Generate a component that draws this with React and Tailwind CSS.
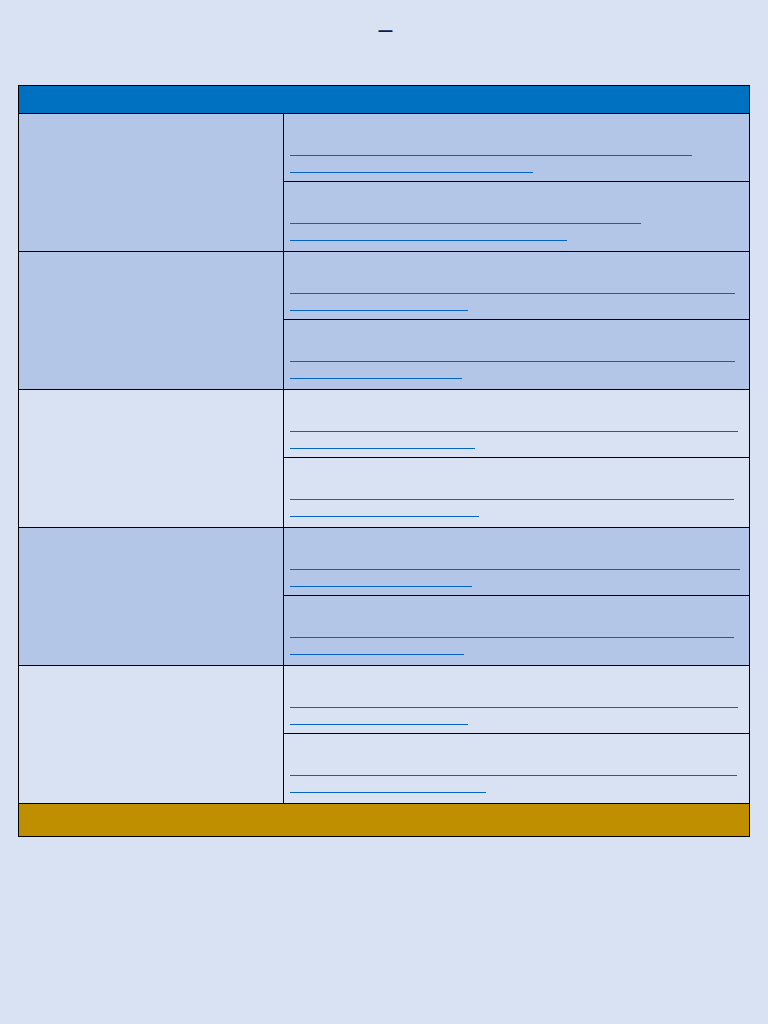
import React from 'react';

const groups = [
    { bg: "bg-[#b4c6e7]", links: [[402, 243], [351, 277]] },
    { bg: "bg-[#b4c6e7]", links: [[445, 178], [445, 172]] },
    { bg: "bg-[#d9e2f3]", links: [[448, 185], [444, 189]] },
    { bg: "bg-[#b4c6e7]", links: [[450, 182], [444, 174]] },
    { bg: "bg-[#d9e2f3]", links: [[448, 178], [447, 196]] },
];

const LinkCell = ({ widths, last }) => (
    <div className={`pl-[6px] pt-[41px] ${last ? "h-[69px]" : "h-[68px] border-b border-black"}`}>
        {widths.map((w, i) => (
            <div
                key={i}
                className={`h-px bg-[#0563c1] ${i > 0 ? "mt-[16px]" : ""}`}
                style={{ width: w }}
            />
        ))}
    </div>
);

const App = () => {
    return (
        <div className="min-h-[1024px] w-full bg-[#d9e2f3] font-['Liberation_Sans',Arial,sans-serif]">
            {/* Title */}
            <div className="h-[85px] pt-[14px] pl-[3px] text-center text-[25px] leading-[30px] text-[#0b1a52]">
                –
            </div>

            {/* Table */}
            <div className="mx-[18px] w-[732px] border border-black">
                <div className="h-[28px] bg-[#0070c0] border-b border-black" />

                {groups.map((g, gi) => (
                    <div
                        key={gi}
                        className={`grid grid-cols-[265px_1fr] border-b border-black ${g.bg}`}
                    >
                        <div className="border-r border-black" />
                        <div>
                            {g.links.map((widths, li) => (
                                <LinkCell key={li} widths={widths} last={li === g.links.length - 1} />
                            ))}
                        </div>
                    </div>
                ))}

                <div className="h-[32px] bg-[#bf8f00]" />
            </div>
        </div>
    );
};

export default App;
